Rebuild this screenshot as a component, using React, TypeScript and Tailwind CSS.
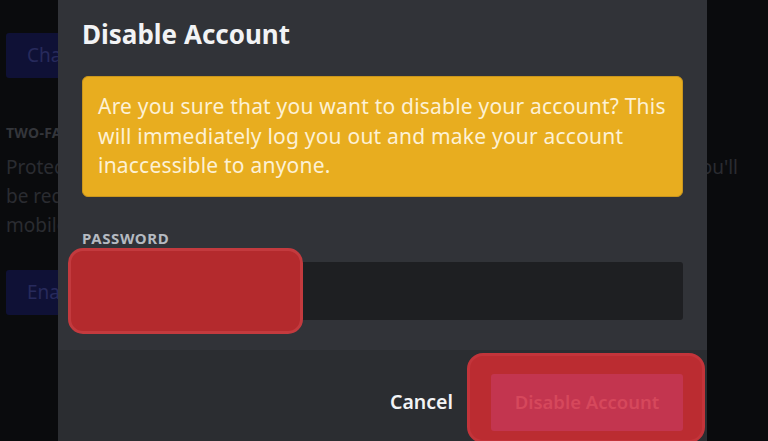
import React from "react";

export default function App() {
  return (
    <div className="relative w-[768px] h-[441px] overflow-hidden bg-[#0a0b0d] font-['Noto_Sans',sans-serif]">
      {/* dimmed page behind the modal */}
      <div className="flex flex-col items-start pl-[6px] pt-[33px]">
        <div className="flex h-[45px] items-center whitespace-nowrap rounded-[3px] bg-[#0f1136] px-[21px] text-[19px] text-[#272a5c]">
          Change Password
        </div>
        <div className="mt-[44px] whitespace-nowrap text-[14px] font-bold tracking-[0.02em] text-[#34363b]">
          TWO-FACTOR AUTHENTICATION
        </div>
        <div className="mt-[10px] flex w-[732px] justify-between whitespace-nowrap text-[19px] leading-[29px] text-[#2a2c31]">
          <span>Protect your Discord account with an extra layer.</span>
          <span>you'll</span>
        </div>
        <div className="whitespace-nowrap text-[19px] leading-[29px] text-[#2a2c31]">be required to enter your password and a code.</div>
        <div className="whitespace-nowrap text-[19px] leading-[29px] text-[#2a2c31]">mobile devices.</div>
        <div className="mt-[30px] flex h-[45px] items-center whitespace-nowrap rounded-[3px] bg-[#0f1136] px-[21px] text-[19px] text-[#272a5c]">
          Enable Authenticator App
        </div>
      </div>

      {/* modal */}
      <div className="absolute left-[58px] top-0 flex h-[441px] w-[649px] flex-col bg-[#313338]">
        <div className="px-[24px] pt-[17px]">
          <div className="text-[26px] font-bold leading-[34px] text-[#f2f3f5]">Disable Account</div>
          <div className="mt-[25px] rounded-[6px] border border-[#c9961d] bg-[#e8ad1f] px-[15px] py-[15px] text-[21px] leading-[29.5px] tracking-[0.01em] text-[#fdf1d4]">
            Are you sure that you want to disable your account? This will immediately log you out and make your account inaccessible to anyone.
          </div>
          <div className="mt-[32px] text-[15px] font-bold leading-[18px] tracking-[0.04em] text-[#b5bac1]">PASSWORD</div>
          <div className="mt-[15px] h-[58px] rounded-[3px] bg-[#1e1f22]" />
        </div>
        <div className="mt-[30px] flex flex-1 items-start justify-end gap-[38px] bg-[#2b2d31] pr-[24px] pt-[24px]">
          <div className="flex h-[57px] items-center text-[19.5px] font-semibold text-[#f2f3f5]">Cancel</div>
          <div className="relative z-10 flex h-[57px] w-[192px] items-center justify-center rounded-[3px] bg-[#c3354f] text-[18.5px] font-semibold text-[#d6485c]">
            Disable Account
          </div>
        </div>
      </div>

      {/* red annotation marks */}
      <div className="absolute left-[68px] top-[248px] h-[86px] w-[235px] rounded-[15px] border-[3px] border-[#c33a3e] bg-[#b42a2d]" />
      <div className="absolute left-[467px] top-[353px] h-[90px] w-[238px] rounded-[16px] border-[3px] border-[#c3343a] bg-[#bb2c31]" />
    </div>
  );
}
